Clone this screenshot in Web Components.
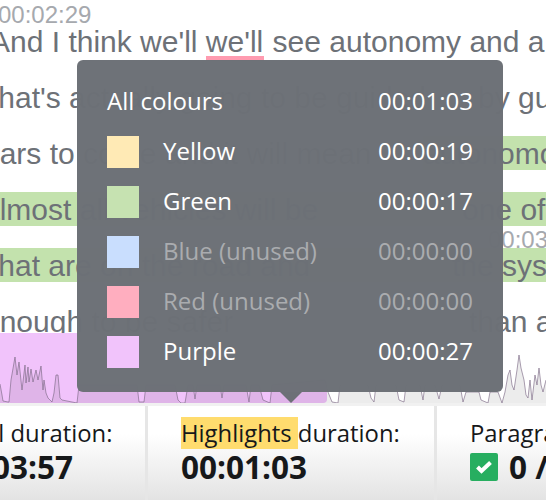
<!DOCTYPE html>
<html>
<head>
<meta charset="utf-8">
<style>
html, body { margin: 0; height: 500px; overflow: hidden; background: #fff; }
</style>
</head>
<body>
<editor-app></editor-app>

<script>
class TranscriptLine extends HTMLElement {
    constructor() {
        super();
        this.attachShadow({ mode: 'open' });
        this.shadowRoot.innerHTML = `
<style>
:host {
    display: flex;
    flex: none;
    height: 34px;
    margin-bottom: 22px;
    white-space: nowrap;
    font: 30px/36px "Liberation Sans", Arial, sans-serif;
    color: #6d7177;
}
::slotted(span) { height: 34px; }
</style>
<slot></slot>`;
    }
}

class TranscriptPane extends HTMLElement {
    constructor() {
        super();
        this.attachShadow({ mode: 'open' });
        this.shadowRoot.innerHTML = `
<style>
:host {
    display: flex;
    flex-direction: column;
    height: 309px;
    padding-top: 24px;
    overflow: hidden;
    position: relative;
}
</style>
<slot></slot>`;
    }
}

class WaveForm extends HTMLElement {
    constructor() {
        super();
        this.attachShadow({ mode: 'open' });
        const pts = [[0,384],[2,395],[3,401],[8,402],[9,402],[11,380],[15,357],[17,375],[19,362],[22,390],[25,365],[26,383],[28,367],[29,382],[31,369],[33,382],[36,370],[38,380],[41,366],[43,390],[44,380],[46,393],[48,398],[52,402],[54,393],[56,375],[58,375],[60,398],[62,400],[77,403],[79,385],
            [137,385],[139,402],[144,402],[146,385],[175,385],[178,400],[181,403],[185,403],[188,385],[193,385],[195,399],[197,385],[220,385],[222,398],[224,385],[246,385],[249,402],[251,385],[259,385],[263,400],[270,403],[272,385],
            [325,380],[328,392],[332,402],[338,403],[340,385],[368,385],[371,398],[374,402],[376,385],[396,385],[399,400],[404,402],[406,385],[420,385],[423,400],[425,385],[435,385],[439,399],[442,385],[460,385],[463,402],[466,392],[479,392],[481,400],[488,403],[490,392],[498,392],[502,403],[505,392],[508,375],[510,370],[512,385],[514,390],[517,370],[519,355],[521,368],[524,380],[526,395],[528,398],[530,380],[532,400],[535,375],[537,385],[539,368],[541,385],[543,392],[546,380]];
        const line = pts.map(p => p[0] + ',' + (p[1] - 333)).join(' ');
        this.shadowRoot.innerHTML = `
<style>
:host {
    display: block;
    position: relative;
    height: 70px;
    background: #fff;
}
.selected {
    position: absolute;
    left: 0;
    top: 0;
    bottom: 0;
    width: 327px;
    background: #f1c3fb;
    border-bottom-right-radius: 4px;
}
svg { position: absolute; left: 0; top: 0; display: block; }
</style>
<div class="selected"></div>
<svg width="546" height="70" viewBox="0 0 546 70">
    <polygon points="0,70 ${line} 546,70" fill="#000" fill-opacity="0.075"/>
    <polyline points="${line}" fill="none" stroke="#7d6a86" stroke-width="1" stroke-opacity="0.65"/>
</svg>`;
    }
}

class ColourRow extends HTMLElement {
    constructor() {
        super();
        this.attachShadow({ mode: 'open' });
        const colour = this.getAttribute('colour');
        this.shadowRoot.innerHTML = `
<style>
:host {
    display: flex;
    align-items: center;
    height: 50px;
    color: #fff;
}
:host([unused]) { color: #aaacaf; }
.swatch {
    flex: none;
    width: 32px;
    height: 32px;
    margin-right: 24px;
    background: ${colour};
}
.name { flex: 1; padding-bottom: 4px; }
.time { padding-bottom: 4px; }
</style>
${colour ? '<div class="swatch"></div>' : ''}
<div class="name"><slot></slot></div>
<div class="time"><slot name="time"></slot></div>`;
    }
}

class ColourPopover extends HTMLElement {
    constructor() {
        super();
        this.attachShadow({ mode: 'open' });
        this.shadowRoot.innerHTML = `
<style>
:host {
    display: block;
    position: absolute;
    left: 77px;
    top: 60px;
    box-sizing: border-box;
    width: 426px;
    height: 332px;
    padding: 17px 30px 0;
    background: rgba(108, 112, 118, 0.99);
    border-radius: 6px;
    font: 24px "Open Sans", sans-serif;
}
:host::after {
    content: "";
    position: absolute;
    left: 203px;
    top: 332px;
    border: 11px solid transparent;
    border-bottom-width: 0;
    border-top-color: rgb(108, 112, 118);
}
</style>
<slot></slot>`;
    }
}

class StatCell extends HTMLElement {
    constructor() {
        super();
        this.attachShadow({ mode: 'open' });
        this.shadowRoot.innerHTML = `
<style>
:host {
    display: block;
    overflow: hidden;
    padding: 10px 0 0 33px;
    white-space: nowrap;
    background: linear-gradient(#fff 30%, #e3e3e3);
    color: #16181a;
    font: 23.85px/34px "Open Sans", sans-serif;
}
.value {
    display: flex;
    align-items: center;
    gap: 11px;
    font-size: 31.5px;
    line-height: 34px;
    font-weight: 700;
}
</style>
<div><slot name="label"></slot></div>
<div class="value"><slot></slot></div>`;
    }
}

class EditorApp extends HTMLElement {
    constructor() {
        super();
        this.attachShadow({ mode: 'open' });
        this.shadowRoot.innerHTML = `
<style>
:host { display: block; position: relative; width: 546px; height: 500px; overflow: hidden; }
.stamp {
    position: absolute;
    height: 19px;
    font: 24px/22px "Liberation Sans", Arial, sans-serif;
    color: #a6a9ae;
    background: #fff;
}
.green { background: #c3e2ad; }
.red { display: inline-block; height: 32px; padding-right: 1px; border-bottom: 5px solid #ff9bb0; }
.gap { height: 3px; background: #f1f1f1; }
.stats {
    display: grid;
    grid-template-columns: 145px 286px 1fr;
    column-gap: 3px;
    height: 94px;
    background: #e6e6e6;
}
.shift { display: block; margin-left: -86px; }
.shift-label { display: block; margin-left: -84px; }
mark { background: #ffdc6e; color: inherit; }
.check { flex: none; width: 28px; height: 28px; display: block; }
</style>
<transcript-pane>
    <transcript-line style="margin-left:-10px"><span>And I think we'll <span class="red">we'll</span> see autonomy and a</span></transcript-line>
    <transcript-line style="margin-left:-10px"><span style="flex:0 0 488px">that's actually going to be guided</span><span>by gu</span></transcript-line>
    <transcript-line style="margin-left:-32px"><span style="flex:0 0 455px">years to come and it will mean</span><span class="green">autonomous</span></transcript-line>
    <transcript-line style="margin-left:-17px"><span class="green" style="flex:0 0 479px">almost all vehicles will be</span><span class="green" style="flex:1">one of</span></transcript-line>
    <transcript-line style="margin-left:-10px"><span class="green" style="flex:0 0 462px">that are on the road and</span><span class="green" style="flex:1">the system</span></transcript-line>
    <transcript-line style="margin-left:-17px"><span style="flex:0 0 486px">enough to be safer</span><span>than a</span></transcript-line>
    <span class="stamp" style="left:-2px;top:4px;">00:02:29</span>
    <span class="stamp" style="left:488px;top:229px;">00:03:10</span>
</transcript-pane>
<wave-form></wave-form>
<div class="gap"></div>
<div class="stats">
    <stat-cell>
        <span slot="label" class="shift-label">Total duration:</span>
        <span class="shift">00:03:57</span>
    </stat-cell>
    <stat-cell>
        <span slot="label"><mark>Highlights </mark>duration:</span>
        00:01:03
    </stat-cell>
    <stat-cell>
        <span slot="label">Paragraphs</span>
        <svg class="check" viewBox="0 0 28 28"><rect width="28" height="28" rx="2" fill="#27ae60"/><path d="M7.5 14l4 4 9-8.5" fill="none" stroke="#fff" stroke-width="4"/></svg>
        0 / 12
    </stat-cell>
</div>
<colour-popover>
    <colour-row><span>All colours</span><span slot="time">00:01:03</span></colour-row>
    <colour-row colour="#ffeab5"><span>Yellow</span><span slot="time">00:00:19</span></colour-row>
    <colour-row colour="#c6e2b1"><span>Green</span><span slot="time">00:00:17</span></colour-row>
    <colour-row colour="#c9defe" unused><span>Blue (unused)</span><span slot="time">00:00:00</span></colour-row>
    <colour-row colour="#ffaebf" unused><span>Red (unused)</span><span slot="time">00:00:00</span></colour-row>
    <colour-row colour="#f1c3fb"><span>Purple</span><span slot="time">00:00:27</span></colour-row>
</colour-popover>`;
    }
}

customElements.define('transcript-line', TranscriptLine);
customElements.define('transcript-pane', TranscriptPane);
customElements.define('wave-form', WaveForm);
customElements.define('colour-row', ColourRow);
customElements.define('colour-popover', ColourPopover);
customElements.define('stat-cell', StatCell);
customElements.define('editor-app', EditorApp);
</script>
</body>
</html>
